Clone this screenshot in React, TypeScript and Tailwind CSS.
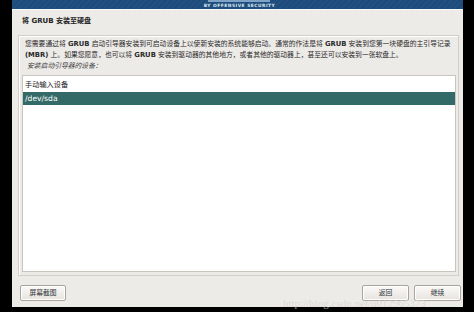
import React from 'react';

const fontStack = { fontFamily: '"DejaVu Sans", "Noto Sans CJK SC", sans-serif' };

function GtkButton({ label, className }: { label: string; className: string }) {
  return (
    <button
      className={`flex h-[16px] items-center justify-center rounded-[2px] border border-[#a9a49c] bg-gradient-to-b from-[#fbfaf9] to-[#e6e3df] text-[6.8px] text-[#2e3436] shadow-[inset_0_0_0_1px_#ffffff] ${className}`}
    >
      {label}
    </button>
  );
}

export default function App() {
  return (
    <div className="relative flex h-[312px] w-[474px] overflow-hidden bg-black pb-[5px] pl-[12px] pr-[11px]" style={fontStack}>
      <div className="flex flex-1 flex-col bg-[#edebe8]">
        {/* banner */}
        <div className="relative flex h-[9px] items-end justify-center bg-[repeating-linear-gradient(135deg,#1d4b7b_0px,#1d4b7b_2px,#22517f_2px,#22517f_4px)]">
          <div className="absolute left-[196px] top-0 h-[2px] w-[62px] bg-[#7fa3c6]" />
          <span className="mb-[1px] ml-[4px] text-[4.4px] font-bold leading-none tracking-[0.5px] text-[#dbe6f0]">
            BY OFFENSIVE SECURITY
          </span>
        </div>
        <div className="h-[1px] bg-[#f6f8fa]" />

        {/* title */}
        <div className="px-[10px] pt-[7px] text-[7px] font-bold leading-[9px] text-[#1e1e1e]">
          将 GRUB 安装至硬盘
        </div>

        {/* main frame */}
        <div className="ml-[6px] mr-[4px] mt-[9px] flex h-[241px] flex-col border border-[#d3cec7] shadow-[inset_1px_1px_0_#ffffff]">
          <p className="px-[6px] pt-[3px] text-[6.8px] leading-[10.5px] text-[#2a2a2a]">
            您需要通过将 <b>GRUB</b> 启动引导器安装到可启动设备上以使新安装的系统能够启动。通常的作法是将 <b>GRUB</b> 安装到您第一块硬盘的主引导记录 <b>(MBR)</b> 上。如果您愿意，也可以将 <b>GRUB</b> 安装到驱动器的其他地方，或者其他的驱动器上，甚至还可以安装到一张软盘上。
          </p>
          <div className="px-[8px] pt-[1px] text-[6.8px] italic leading-[10px] text-[#3a3a3a]">
            安装启动引导器的设备：
          </div>

          <div className="mb-[3px] ml-[3px] mr-[2px] mt-[4px] flex flex-1 flex-col border border-[#c9c4bd] bg-white pt-[3px]">
            <div className="flex h-[13px] items-center px-[2px] text-[7.2px] text-[#222222]">手动输入设备</div>
            <div className="flex h-[13px] items-center bg-[#336a67] px-[2px] text-[7.6px] text-white">/dev/sda</div>
          </div>
        </div>

        {/* buttons */}
        <div className="mt-[9px] flex items-center pl-[8px] pr-[2px]">
          <GtkButton label="屏幕截图" className="w-[46px]" />
          <div className="flex-1" />
          <GtkButton label="返回" className="w-[47px]" />
          <GtkButton label="继续" className="ml-[5px] w-[47px]" />
        </div>
      </div>

      <div
        className="absolute left-[283px] top-[298px] whitespace-nowrap text-[11px] leading-none text-[#d4d2cf] opacity-70"
        style={{ fontFamily: '"Liberation Serif", serif' }}
      >
        http://blog.csdn.net/u012965373
      </div>
    </div>
  );
}
